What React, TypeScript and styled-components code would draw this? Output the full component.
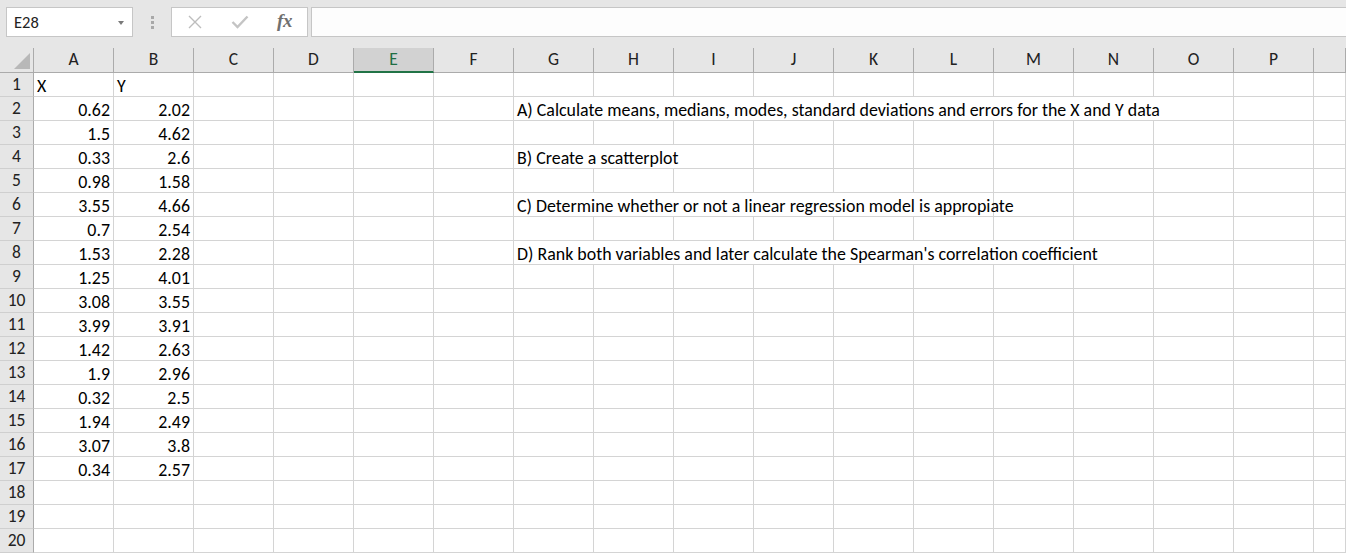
import React from "react";
import styled, { createGlobalStyle } from "styled-components";

const FONT = `"Carlito", "Open Sans", "Noto Sans", sans-serif`;

const Global = createGlobalStyle`
  html, body { margin: 0; padding: 0; background: #ffffff; overflow: hidden; }
  body { font-family: ${FONT}; }
  #root { width: 1346px; height: 554px; overflow: hidden; }
`;

const Page = styled.div`
  width: 1346px;
  height: 554px;
  display: flex;
  flex-direction: column;
  background: #ffffff;
`;

const FormulaBar = styled.div`
  height: 48px;
  background: #e6e6e6;
  display: flex;
  align-items: flex-start;
  padding: 7px 0 0 6px;
  box-sizing: border-box;
`;

const NameBox = styled.div`
  width: 127px;
  height: 30px;
  box-sizing: border-box;
  background: #ffffff;
  border: 1px solid #c6c6c6;
  display: flex;
  align-items: center;
  justify-content: space-between;
  padding: 0 8px 0 7px;
  font-size: 16.5px;
  color: #222;
`;

const DropArrow = styled.span`
  width: 0;
  height: 0;
  border-left: 3.5px solid transparent;
  border-right: 3.5px solid transparent;
  border-top: 4px solid #7a7a7a;
  margin-top: 1px;
`;

const Grip = styled.div`
  width: 38px;
  height: 30px;
  display: flex;
  flex-direction: column;
  align-items: center;
  justify-content: center;
  gap: 2px;
`;

const GripDot = styled.span`
  width: 3px;
  height: 3px;
  background: #a8a8a8;
`;

const ButtonGroup = styled.div`
  width: 137px;
  height: 30px;
  box-sizing: border-box;
  background: #ffffff;
  border: 1px solid #c6c6c6;
  display: grid;
  grid-template-columns: repeat(3, 1fr);
  align-items: center;
  justify-items: center;
  margin-right: 3px;
`;

const FxText = styled.span`
  font-family: "Liberation Serif", "DejaVu Serif", serif;
  font-style: italic;
  font-weight: bold;
  font-size: 19px;
  color: #707070;
  letter-spacing: -0.5px;
  margin-top: -3px;
`;

const FormulaInput = styled.div`
  flex: 1;
  height: 30px;
  box-sizing: border-box;
  background: #fdfdfd;
  border: 1px solid #c6c6c6;
  border-right: none;
`;

const Sheet = styled.div`
  display: grid;
  grid-template-columns: 34px repeat(16, 80px) 32px;
  grid-template-rows: 25px repeat(20, 24px);
`;

const Corner = styled.div`
  background: #e6e6e6;
  border-right: 1px solid #ababab;
  border-bottom: 1px solid #ababab;
  box-sizing: border-box;
  display: flex;
  align-items: flex-end;
  justify-content: flex-end;
  padding: 0 3px 3px 0;
`;

const CornerTriangle = styled.span`
  width: 0;
  height: 0;
  border-left: 16px solid transparent;
  border-bottom: 16px solid #b8b8b8;
`;

const ColHeader = styled.div<{ $selected?: boolean }>`
  background: ${(p) => (p.$selected ? "#d2d2d2" : "#e6e6e6")};
  border-right: 1px solid #ababab;
  border-bottom: ${(p) => (p.$selected ? "2px solid #217346" : "1px solid #ababab")};
  box-sizing: border-box;
  display: flex;
  align-items: center;
  justify-content: center;
  font-size: 17.5px;
  line-height: 1;
  color: ${(p) => (p.$selected ? "#1f6e43" : "#222")};
  padding-top: ${(p) => (p.$selected ? "1px" : "0")};
`;

const RowHeader = styled.div`
  background: #e6e6e6;
  border-right: 1px solid #ababab;
  border-bottom: 1px solid #cfcfcf;
  box-sizing: border-box;
  display: flex;
  align-items: center;
  justify-content: center;
  font-size: 17.5px;
  line-height: 1;
  padding-top: 1px;
  color: #222;
`;

const Cell = styled.div<{ $align?: "left" | "right"; $span?: number }>`
  grid-column: ${(p) => (p.$span ? `span ${p.$span}` : "auto")};
  border-right: 1px solid #d4d4d4;
  border-bottom: 1px solid #d4d4d4;
  box-sizing: border-box;
  display: flex;
  align-items: flex-end;
  justify-content: ${(p) => (p.$align === "right" ? "flex-end" : "flex-start")};
  padding: 0 ${(p) => (p.$align === "right" ? "3px" : "0")} 0
    ${(p) => (p.$align === "right" ? "0" : "3px")};
  font-size: 17.9px;
  line-height: 1;
  color: #000;
  white-space: nowrap;
  overflow: visible;
`;

const COLS = ["A", "B", "C", "D", "E", "F", "G", "H", "I", "J", "K", "L", "M", "N", "O", "P", ""];

const XS = ["0.62", "1.5", "0.33", "0.98", "3.55", "0.7", "1.53", "1.25", "3.08", "3.99", "1.42", "1.9", "0.32", "1.94", "3.07", "0.34"];
const YS = ["2.02", "4.62", "2.6", "1.58", "4.66", "2.54", "2.28", "4.01", "3.55", "3.91", "2.63", "2.96", "2.5", "2.49", "3.8", "2.57"];

const NOTES: Record<number, { text: string; span: number }> = {
  2: { text: "A) Calculate means, medians, modes, standard deviations and errors for the X and Y data", span: 9 },
  4: { text: "B) Create a scatterplot", span: 3 },
  6: { text: "C) Determine whether or not a linear regression model is appropiate", span: 6 },
  8: { text: "D) Rank both variables and later calculate the Spearman's correlation coefficient", span: 8 },
};

function renderRow(r: number) {
  const cells: React.ReactNode[] = [<RowHeader key="h">{r}</RowHeader>];
  let a = "";
  let b = "";
  let alignAB: "left" | "right" = "right";
  if (r === 1) {
    a = "X";
    b = "Y";
    alignAB = "left";
  } else if (r >= 2 && r <= 17) {
    a = XS[r - 2];
    b = YS[r - 2];
  }
  cells.push(
    <Cell key="A" $align={alignAB}>{a}</Cell>,
    <Cell key="B" $align={alignAB}>{b}</Cell>
  );
  for (let c = 2; c < 6; c++) cells.push(<Cell key={COLS[c]} />);
  const note = NOTES[r];
  let c = 6;
  if (note) {
    cells.push(
      <Cell key="G" $align="left" $span={note.span}>
        {note.text}
      </Cell>
    );
    c += note.span;
  }
  for (; c < 17; c++) cells.push(<Cell key={"c" + c} />);
  return <React.Fragment key={r}>{cells}</React.Fragment>;
}

const XIcon = () => (
  <svg width="16" height="14" viewBox="0 0 16 14">
    <path d="M2 1 L14 13 M14 1 L2 13" stroke="#bdbdbd" strokeWidth="1.4" fill="none" />
  </svg>
);

const CheckIcon = () => (
  <svg width="18" height="14" viewBox="0 0 18 14">
    <path d="M1.5 7 L6.5 12 L16.5 1.5" stroke="#c4c4c4" strokeWidth="2.4" fill="none" />
  </svg>
);

export default function App() {
  const rows = Array.from({ length: 20 }, (_, i) => i + 1);
  return (
    <Page>
      <Global />
      <FormulaBar>
        <NameBox>
          <span>E28</span>
          <DropArrow />
        </NameBox>
        <Grip>
          <GripDot />
          <GripDot />
          <GripDot />
        </Grip>
        <ButtonGroup>
          <XIcon />
          <CheckIcon />
          <FxText>fx</FxText>
        </ButtonGroup>
        <FormulaInput />
      </FormulaBar>
      <Sheet>
        <Corner>
          <CornerTriangle />
        </Corner>
        {COLS.map((c, i) => (
          <ColHeader key={"h" + i} $selected={c === "E"}>
            {c}
          </ColHeader>
        ))}
        {rows.map((r) => renderRow(r))}
      </Sheet>
    </Page>
  );
}
